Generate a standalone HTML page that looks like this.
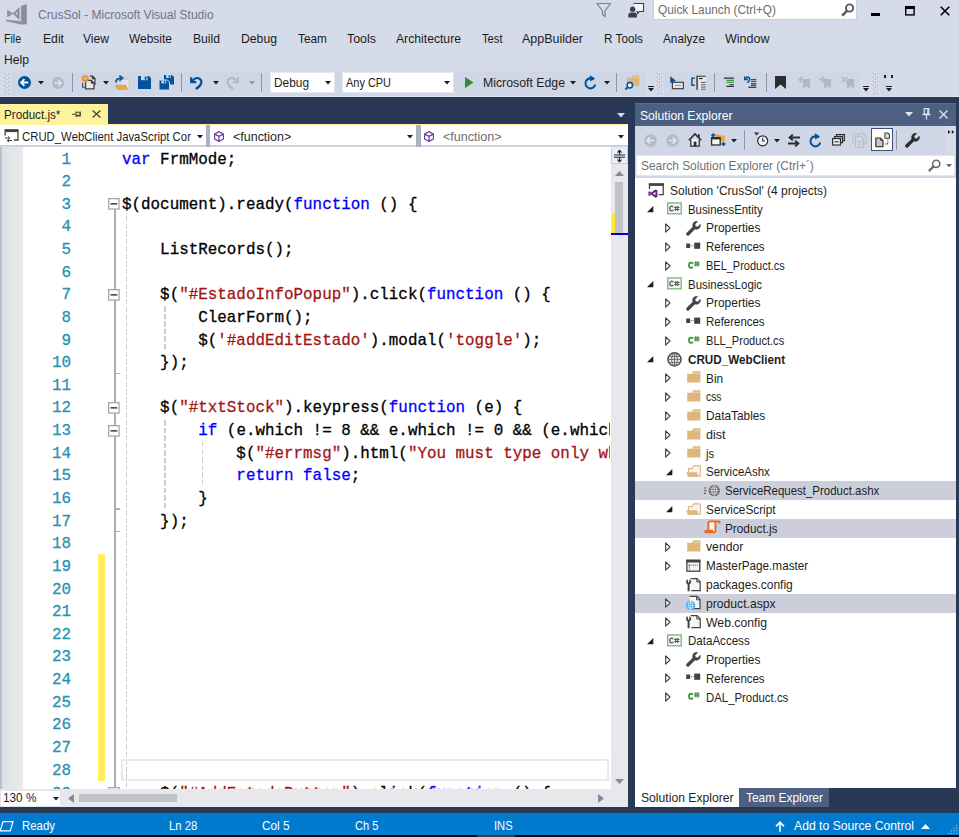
<!DOCTYPE html>
<html>
<head>
<meta charset="utf-8">
<title>CrusSol - Microsoft Visual Studio</title>
<style>
*{box-sizing:border-box;margin:0;padding:0}
html,body{width:959px;height:837px;overflow:hidden;background:#293955;font-family:"Liberation Sans",sans-serif;font-size:12px;color:#1e1e1e}
.abs{position:absolute}
svg{display:block;overflow:visible}
#app{position:relative;width:959px;height:837px;overflow:hidden;background:#293955}
.t{position:absolute;white-space:nowrap;transform-origin:0 50%}
.mono{font-family:"Liberation Mono",monospace}
.ln{-webkit-text-stroke:0.3px;position:absolute;left:0;white-space:pre;font-family:"Liberation Mono",monospace;color:#000;transform-origin:0 50%}
.k{color:#0000ff}.s{color:#a31515}

</style>
</head>
<body>
<div id="app">
<div class="abs" style="left:0px;top:0px;width:959px;height:97px;background:#d6dbe9;"></div>
<div class="abs" style="left:0px;top:96px;width:959px;height:1px;background:#e1e5ef;"></div>
<svg class="abs" style="left:5.5px;top:3.5px" width="21" height="21" viewBox="0 0 21 21"><g fill="#898c9a" stroke="#898c9a" stroke-width=".5" stroke-linejoin="round"><path d="M15.2 2.1L20.5 0.4V20L15.2 17.2Z"/><path d="M0.2 15.9L15.2 17.4L20.5 20L15.2 20.3L0.2 16.8Z"/><path d="M1.5 6.3L7 9.6L13.2 3.6V15.4L7 9.6 1.5 12.9ZM3.1 8.6V10.6L4.9 9.6ZM11.7 7.3L9 9.6L11.7 11.9Z" fill-rule="evenodd"/></g></svg>
<div class="t" style="left:38.30px;top:8.00px;font-size:12.6px;line-height:15.12px;color:#717486;transform:scaleX(0.9553);">CrusSol - Microsoft Visual Studio</div>
<svg class="abs" style="left:596px;top:2px" width="16" height="16" viewBox="0 0 16 16"><path d="M1 1.5H14.5L9 9V14.5L6.5 12.5V9Z" fill="none" stroke="#7a7f8e" stroke-width="1.2" stroke-linejoin="round"/></svg>
<svg class="abs" style="left:628px;top:3px" width="16" height="15" viewBox="0 0 16 15"><path d="M5.5 0.5H15.5V8.5H11.5L9.5 10.5V8.5H8.5" fill="#f4f6fa" stroke="#3b3f4a" stroke-width="1.1"/><circle cx="4.6" cy="6.2" r="2.6" fill="#3b3f4a"/><path d="M0.3 14.5V12.2Q0.3 9.6 3 9.6H6.2Q8.9 9.6 8.9 12.2V14.5Z" fill="#3b3f4a"/></svg>
<div class="abs" style="left:653px;top:0px;width:204px;height:20.3px;background:#ffffff;border:1px solid #c9cedd;border-top:none"></div>
<div class="t" style="left:658.00px;top:3.00px;font-size:12.6px;line-height:15.12px;color:#6d6d6d;transform:scaleX(0.9388);">Quick Launch (Ctrl+Q)</div>
<svg class="abs" style="left:841px;top:3px" width="14" height="14" viewBox="0 0 14 14"><circle cx="8.6" cy="5" r="3.6" fill="none" stroke="#5a5a5e" stroke-width="1.9"/><path d="M6 7.8L1.2 12.6" stroke="#5a5a5e" stroke-width="2.6" stroke-linecap="butt"/></svg>
<div class="abs" style="left:870.5px;top:13px;width:9.5px;height:3px;background:#000;"></div>
<svg class="abs" style="left:905px;top:5.5px" width="10" height="10" viewBox="0 0 10 10"><rect x="0.7" y="0.7" width="8.4" height="8.2" fill="none" stroke="#000" stroke-width="1.4"/><rect x="0" y="0" width="9.8" height="3" fill="#000"/></svg>
<svg class="abs" style="left:939.5px;top:5.5px" width="10" height="10" viewBox="0 0 10 10"><path d="M0.7 0.7L9.3 9.3M9.3 0.7L0.7 9.3" stroke="#000" stroke-width="1.6"/></svg>
<div class="t" style="left:4.00px;top:32.00px;font-size:12.6px;line-height:15.12px;color:#1b1b1c;transform:scaleX(0.8374);">File</div>
<div class="t" style="left:42.50px;top:32.00px;font-size:12.6px;line-height:15.12px;color:#1b1b1c;transform:scaleX(0.9672);">Edit</div>
<div class="t" style="left:83.00px;top:32.00px;font-size:12.6px;line-height:15.12px;color:#1b1b1c;transform:scaleX(0.9600);">View</div>
<div class="t" style="left:128.50px;top:32.00px;font-size:12.6px;line-height:15.12px;color:#1b1b1c;transform:scaleX(0.9495);">Website</div>
<div class="t" style="left:192.50px;top:32.00px;font-size:12.6px;line-height:15.12px;color:#1b1b1c;transform:scaleX(0.9637);">Build</div>
<div class="t" style="left:240.50px;top:32.00px;font-size:12.6px;line-height:15.12px;color:#1b1b1c;transform:scaleX(0.9697);">Debug</div>
<div class="t" style="left:297.50px;top:32.00px;font-size:12.6px;line-height:15.12px;color:#1b1b1c;transform:scaleX(0.9413);">Team</div>
<div class="t" style="left:346.50px;top:32.00px;font-size:12.6px;line-height:15.12px;color:#1b1b1c;transform:scaleX(0.9860);">Tools</div>
<div class="t" style="left:395.50px;top:32.00px;font-size:12.6px;line-height:15.12px;color:#1b1b1c;transform:scaleX(0.9669);">Architecture</div>
<div class="t" style="left:481.50px;top:32.00px;font-size:12.6px;line-height:15.12px;color:#1b1b1c;transform:scaleX(0.8872);">Test</div>
<div class="t" style="left:522.00px;top:32.00px;font-size:12.6px;line-height:15.12px;color:#1b1b1c;transform:scaleX(0.9897);">AppBuilder</div>
<div class="t" style="left:603.50px;top:32.00px;font-size:12.6px;line-height:15.12px;color:#1b1b1c;transform:scaleX(0.9334);">R Tools</div>
<div class="t" style="left:662.50px;top:32.00px;font-size:12.6px;line-height:15.12px;color:#1b1b1c;transform:scaleX(0.9370);">Analyze</div>
<div class="t" style="left:724.50px;top:32.00px;font-size:12.6px;line-height:15.12px;color:#1b1b1c;transform:scaleX(0.9930);">Window</div>
<div class="t" style="left:4.00px;top:53.00px;font-size:12.6px;line-height:15.12px;color:#1b1b1c;transform:scaleX(0.9648);">Help</div>
<div class="abs" style="left:10px;top:70.5px;width:635px;height:25.5px;background:#cfd6e5;"></div>
<div class="abs" style="left:664px;top:70.5px;width:196px;height:25.5px;background:#cfd6e5;"></div>
<div class="abs" style="left:881px;top:70.5px;width:7px;height:25.5px;background:#cfd6e5;"></div>
<svg class="abs" style="left:4px;top:73px" width="5" height="21" viewBox="0 0 5 21"><g fill="#a0a8bd"><rect x="0" y="0" width="1" height="1"/><rect x="4" y="0" width="1" height="1"/><rect x="2" y="2" width="1" height="1"/><rect x="0" y="4" width="1" height="1"/><rect x="4" y="4" width="1" height="1"/><rect x="2" y="6" width="1" height="1"/><rect x="0" y="8" width="1" height="1"/><rect x="4" y="8" width="1" height="1"/><rect x="2" y="10" width="1" height="1"/><rect x="0" y="12" width="1" height="1"/><rect x="4" y="12" width="1" height="1"/><rect x="2" y="14" width="1" height="1"/><rect x="0" y="16" width="1" height="1"/><rect x="4" y="16" width="1" height="1"/><rect x="2" y="18" width="1" height="1"/><rect x="0" y="20" width="1" height="1"/><rect x="4" y="20" width="1" height="1"/></g></svg>
<svg class="abs" style="left:657px;top:73px" width="5" height="21" viewBox="0 0 5 21"><g fill="#a0a8bd"><rect x="0" y="0" width="1" height="1"/><rect x="4" y="0" width="1" height="1"/><rect x="2" y="2" width="1" height="1"/><rect x="0" y="4" width="1" height="1"/><rect x="4" y="4" width="1" height="1"/><rect x="2" y="6" width="1" height="1"/><rect x="0" y="8" width="1" height="1"/><rect x="4" y="8" width="1" height="1"/><rect x="2" y="10" width="1" height="1"/><rect x="0" y="12" width="1" height="1"/><rect x="4" y="12" width="1" height="1"/><rect x="2" y="14" width="1" height="1"/><rect x="0" y="16" width="1" height="1"/><rect x="4" y="16" width="1" height="1"/><rect x="2" y="18" width="1" height="1"/><rect x="0" y="20" width="1" height="1"/><rect x="4" y="20" width="1" height="1"/></g></svg>
<svg class="abs" style="left:873px;top:73px" width="5" height="21" viewBox="0 0 5 21"><g fill="#a0a8bd"><rect x="0" y="0" width="1" height="1"/><rect x="4" y="0" width="1" height="1"/><rect x="2" y="2" width="1" height="1"/><rect x="0" y="4" width="1" height="1"/><rect x="4" y="4" width="1" height="1"/><rect x="2" y="6" width="1" height="1"/><rect x="0" y="8" width="1" height="1"/><rect x="4" y="8" width="1" height="1"/><rect x="2" y="10" width="1" height="1"/><rect x="0" y="12" width="1" height="1"/><rect x="4" y="12" width="1" height="1"/><rect x="2" y="14" width="1" height="1"/><rect x="0" y="16" width="1" height="1"/><rect x="4" y="16" width="1" height="1"/><rect x="2" y="18" width="1" height="1"/><rect x="0" y="20" width="1" height="1"/><rect x="4" y="20" width="1" height="1"/></g></svg>
<svg class="abs" style="left:17.5px;top:75.5px" width="13" height="13" viewBox="0 0 13 13"><circle cx="6.5" cy="6.5" r="6.5" fill="#00539c"/><path d="M10.3 6.5H3.4M6.4 3.2L3.1 6.5L6.4 9.8" fill="none" stroke="#fff" stroke-width="1.8"/></svg>
<svg class="abs" style="left:38.0px;top:80.75px" width="6" height="3.5" viewBox="0 0 6 3.5"><path d="M0 0H6L3.0 3.5Z" fill="#1e1e1e"/></svg>
<svg class="abs" style="left:51.5px;top:76.5px" width="12" height="12" viewBox="0 0 12 12"><circle cx="6" cy="6" r="6" fill="#b5b9c6"/><path d="M2.6 6H9M6.2 3L9.2 6L6.2 9" fill="none" stroke="#e3e6ef" stroke-width="1.6"/></svg>
<div class="abs" style="left:72px;top:72.5px;width:1px;height:19.5px;background:#8f95a8;"></div>
<svg class="abs" style="left:81px;top:75px" width="15" height="15" viewBox="0 0 15 15"><path d="M8.6 1.2H11.6L14 3.6V9.4H12" fill="#e6e8f0" stroke="#424242" stroke-width="1.2"/><path d="M11.2 1.2V4H14" fill="#2d2d30" stroke="#2d2d30" stroke-width=".6"/><path d="M4.6 8V12.2H1.6V7.8" fill="none" stroke="#4a4a4a" stroke-width="1.1"/><path d="M4.6 5.4H10.4L13 8V13.9H4.6Z" fill="#e6e8f0" stroke="#424242" stroke-width="1.3" stroke-linejoin="round"/><path d="M10.2 5.4V8.2H13" fill="#2d2d30" stroke="#2d2d30" stroke-width=".5"/><g stroke="#e8912d" stroke-width="1.5"><path d="M4.1 -.2V7.2M.4 3.5H7.8M1.5 .9L6.7 6.1M6.7 .9L1.5 6.1"/></g><circle cx="4.1" cy="3.5" r=".9" fill="#fbe9cf"/></svg>
<svg class="abs" style="left:103.0px;top:80.75px" width="6" height="3.5" viewBox="0 0 6 3.5"><path d="M0 0H6L3.0 3.5Z" fill="#1e1e1e"/></svg>
<svg class="abs" style="left:115px;top:75px" width="16" height="15" viewBox="0 0 16 15"><path d="M8 4.2H14.2V14.4H4" fill="#e3e5ef" stroke="#e6c088" stroke-width="1"/><path d="M0 9.7H11L12.9 14.7H2Z" fill="#e0a94f"/><path d="M1 7.4Q.6 3.4 6.4 3.1" fill="none" stroke="#00539c" stroke-width="1.8"/><path d="M4.4 .6L7.6 3.1L4.4 5.6" fill="none" stroke="#00539c" stroke-width="1.7"/></svg>
<svg class="abs" style="left:138px;top:76px" width="13" height="13" viewBox="0 0 13 13"><path d="M0 0H11L13 2V13H0Z" fill="#00539c"/><rect x="3" y="0" width="6.5" height="4.2" fill="#cfd6e5"/><rect x="6.7" y="0.6" width="1.8" height="3" fill="#00539c"/><rect x="2.5" y="7.5" width="8" height="5.5" fill="#00539c"/></svg>
<svg class="abs" style="left:159px;top:75px" width="15" height="15" viewBox="0 0 15 15"><path d="M5 0H13L15 2V9.5H5Z" fill="#00539c"/><rect x="7.2" y="0" width="4.6" height="3" fill="#cfd6e5"/><rect x="9.6" y=".4" width="1.4" height="2.2" fill="#00539c"/><path d="M0 5H8.5L10.5 7V15H0Z" fill="#00539c" stroke="#cfd6e5" stroke-width="1"/><rect x="2.4" y="5.4" width="4.8" height="3" fill="#cfd6e5"/><rect x="4.9" y="5.8" width="1.4" height="2.2" fill="#00539c"/></svg>
<div class="abs" style="left:181px;top:72.5px;width:1px;height:19.5px;background:#8f95a8;"></div>
<svg class="abs" style="left:190px;top:75.5px" width="13" height="14" viewBox="0 0 13 14"><path d="M1.2 1.2V6.2H6.2" fill="none" stroke="#00539c" stroke-width="2.2"/><path d="M2 5.5Q5 1.2 8.6 2.2Q12 3.6 11.2 7.4Q10.4 10.2 5.8 13" fill="none" stroke="#00539c" stroke-width="2.2"/></svg>
<svg class="abs" style="left:212.5px;top:80.75px" width="6" height="3.5" viewBox="0 0 6 3.5"><path d="M0 0H6L3.0 3.5Z" fill="#1e1e1e"/></svg>
<svg class="abs" style="left:226px;top:75.5px" width="13" height="14" viewBox="0 0 13 14"><path d="M11.8 1.2V6.2H6.8" fill="none" stroke="#b5b9c6" stroke-width="2.2"/><path d="M11 5.5Q8 1.2 4.4 2.2Q1 3.6 1.8 7.4Q2.6 10.2 7.2 13" fill="none" stroke="#b5b9c6" stroke-width="2.2"/></svg>
<svg class="abs" style="left:248.5px;top:80.75px" width="6" height="3.5" viewBox="0 0 6 3.5"><path d="M0 0H6L3.0 3.5Z" fill="#8f94a3"/></svg>
<div class="abs" style="left:261px;top:72.5px;width:1px;height:19.5px;background:#8f95a8;"></div>
<div class="abs" style="left:269.5px;top:72px;width:65.5px;height:21px;background:#ffffff;border:1px solid #e3e7f0"></div>
<div class="t" style="left:274.00px;top:76.00px;font-size:12.6px;line-height:15.12px;color:#1e1e1e;transform:scaleX(0.9427);">Debug</div>
<svg class="abs" style="left:324.5px;top:81.25px" width="6" height="3.5" viewBox="0 0 6 3.5"><path d="M0 0H6L3.0 3.5Z" fill="#1e1e1e"/></svg>
<div class="abs" style="left:342px;top:72px;width:112px;height:21px;background:#ffffff;border:1px solid #e3e7f0"></div>
<div class="t" style="left:346.00px;top:76.00px;font-size:12.6px;line-height:15.12px;color:#1e1e1e;transform:scaleX(0.8685);">Any CPU</div>
<svg class="abs" style="left:443.5px;top:81.25px" width="6" height="3.5" viewBox="0 0 6 3.5"><path d="M0 0H6L3.0 3.5Z" fill="#1e1e1e"/></svg>
<svg class="abs" style="left:465px;top:77px" width="9" height="11" viewBox="0 0 9 11"><path d="M0 0L8.5 5.5L0 11Z" fill="#388a34"/></svg>
<div class="t" style="left:482.50px;top:76.00px;font-size:12.6px;line-height:15.12px;color:#1e1e1e;transform:scaleX(0.9758);">Microsoft Edge</div>
<svg class="abs" style="left:569.5px;top:81.25px" width="6" height="3.5" viewBox="0 0 6 3.5"><path d="M0 0H6L3.0 3.5Z" fill="#1e1e1e"/></svg>
<svg class="abs" style="left:584px;top:75px" width="13" height="15" viewBox="0 0 13 15"><path d="M9.8 4.6A5 5 0 1 0 11.3 9.6" fill="none" stroke="#00539c" stroke-width="2.1"/><path d="M5.8 0.2L11 3.2L6.2 6.6Z" fill="#00539c"/></svg>
<svg class="abs" style="left:603.5px;top:81.25px" width="6" height="3.5" viewBox="0 0 6 3.5"><path d="M0 0H6L3.0 3.5Z" fill="#1e1e1e"/></svg>
<div class="abs" style="left:616px;top:72.5px;width:1px;height:19.5px;background:#8f95a8;"></div>
<svg class="abs" style="left:625px;top:75px" width="15" height="15" viewBox="0 0 15 15"><path d="M2 2.4H6.4L7.8 .6H14.2V11H2Z" fill="#dcb67a"/><path d="M8.4 2H13.4" stroke="#ecd3a6" stroke-width=".9"/><circle cx="4.8" cy="10.2" r="2.7" fill="#eef1f7" stroke="#00539c" stroke-width="1.5"/><path d="M2.9 12.1L.5 14.5" stroke="#00539c" stroke-width="1.9"/></svg>
<div class="abs" style="left:647.5px;top:85.5px;width:6px;height:1.3px;background:#1e1e1e;"></div>
<svg class="abs" style="left:647.5px;top:88.25px" width="6" height="3.5" viewBox="0 0 6 3.5"><path d="M0 0H6L3.0 3.5Z" fill="#1e1e1e"/></svg>
<svg class="abs" style="left:670px;top:75px" width="15" height="15" viewBox="0 0 15 15"><path d="M.3 1.2V8.6L2.2 6.9L3.5 9.4L4.9 8.7L3.7 6.3L6.2 6.1Z" fill="#00539c"/><rect x="2.4" y="7.3" width="11" height="6.4" fill="#e4e7f0" stroke="#424242" stroke-width="1.2"/><path d="M5 10.5H11" stroke="#9a9ca6" stroke-width="1.1"/></svg>
<svg class="abs" style="left:691px;top:75px" width="15" height="15" viewBox="0 0 15 15"><path d="M3.8 3.2H.9V10.2H3.8" fill="none" stroke="#00539c" stroke-width="1.4"/><path d="M6.2 .7V14.8" stroke="#5a5a5a" stroke-width="2"/><path d="M6.2 1.3H14.6" stroke="#5a5a5a" stroke-width="1.3"/><rect x="7.2" y="2" width="7.4" height="12.8" fill="#e4e7f0"/><path d="M8 3.5H11.6" stroke="#2d2d30" stroke-width="1.2"/><path d="M10 7.4H14.6M10 9.8H14.6M10 12.1H14.6M10 14.2H14.6" stroke="#5a5a5a" stroke-width="1"/></svg>
<div class="abs" style="left:713.5px;top:72.5px;width:1px;height:19.5px;background:#8f95a8;"></div>
<svg class="abs" style="left:724px;top:76px" width="11" height="12" viewBox="0 0 11 12"><path d="M0 2.1H10M2.3 10.4H10" stroke="#2d2d30" stroke-width="1.2"/><path d="M5.2 8.6H10" stroke="#5a5a5a" stroke-width="1.2"/><path d="M2.6 4.4H10M2.6 6.3H10" stroke="#3c9a3c" stroke-width="1.3"/></svg>
<svg class="abs" style="left:744px;top:75px" width="13" height="14" viewBox="0 0 13 14"><path d="M.7 1.4V4.6H3.9" fill="none" stroke="#00539c" stroke-width="1.4"/><path d="M1.2 4.2Q2.8 1.4 4.8 2.4Q6.6 3.8 4.8 6.2L3.4 7.8" fill="none" stroke="#00539c" stroke-width="1.5"/><path d="M7 4.6H12.3M7 6.5H12.3M7 8.6H12.3M7 10.4H12.3" stroke="#4a4a4a" stroke-width="1.1"/><path d="M4.3 12.3H12.3" stroke="#2d2d30" stroke-width="1.2"/></svg>
<div class="abs" style="left:766px;top:72.5px;width:1px;height:19.5px;background:#8f95a8;"></div>
<svg class="abs" style="left:775px;top:76px" width="11" height="13" viewBox="0 0 11 13"><path d="M0 0H11V13L5.5 8.6L0 13Z" fill="#2d2d30"/></svg>
<svg class="abs" style="left:798px;top:76px" width="12" height="13" viewBox="0 0 12 13"><path d="M5 3H12V13L8.5 10L5 13Z" fill="#b3b7c4"/><path d="M7 3.6H1.2M3.8 .8L1 3.6L3.8 6.4" fill="none" stroke="#b3b7c4" stroke-width="1.5"/></svg>
<svg class="abs" style="left:819px;top:76px" width="12" height="13" viewBox="0 0 12 13"><path d="M5 3H12V13L8.5 10L5 13Z" fill="#b3b7c4"/><path d="M0 3.6H5.8M3.2 .8L6 3.6L3.2 6.4" fill="none" stroke="#b3b7c4" stroke-width="1.5"/></svg>
<svg class="abs" style="left:840.5px;top:76px" width="13" height="13" viewBox="0 0 13 13"><path d="M6 3H13V13L9.5 10L6 13Z" fill="#b3b7c4"/><path d="M.5 .8L6.5 6.8M6.5 .8L.5 6.8" fill="none" stroke="#b3b7c4" stroke-width="1.5"/></svg>
<div class="abs" style="left:863px;top:85.5px;width:6px;height:1.3px;background:#1e1e1e;"></div>
<svg class="abs" style="left:863.0px;top:88.25px" width="6" height="3.5" viewBox="0 0 6 3.5"><path d="M0 0H6L3.0 3.5Z" fill="#1e1e1e"/></svg>
<div class="abs" style="left:884px;top:75px;width:1.5px;height:3px;background:#1e1e1e;"></div>
<div class="abs" style="left:891px;top:75px;width:1.5px;height:3px;background:#1e1e1e;"></div>
<div class="abs" style="left:886px;top:85.5px;width:6px;height:1.3px;background:#1e1e1e;"></div>
<svg class="abs" style="left:886.0px;top:88.25px" width="6" height="3.5" viewBox="0 0 6 3.5"><path d="M0 0H6L3.0 3.5Z" fill="#1e1e1e"/></svg>
<div class="abs" style="left:0px;top:103.5px;width:107.5px;height:21px;background:#fff29d;"></div>
<div class="t" style="left:4.20px;top:108.00px;font-size:12.6px;line-height:15.12px;color:#1e1e1e;transform:scaleX(0.9257);">Product.js*</div>
<svg class="abs" style="left:72px;top:110.5px" width="10" height="7" viewBox="0 0 10 7"><path d="M0 3.2H4M4 .4V6M4.4 1.2H8.2V4.2H4.4M4.4 5H8.2" fill="none" stroke="#4b4a3b" stroke-width="1.1"/><path d="M8.2 .8V5.6" stroke="#4b4a3b" stroke-width="1.2"/></svg>
<svg class="abs" style="left:91.7px;top:110.3px" width="9" height="8" viewBox="0 0 9 8"><path d="M.6 .4L8.4 7.6M8.4 .4L.6 7.6" stroke="#4b4a3b" stroke-width="1.4"/></svg>
<div class="abs" style="left:0px;top:123.6px;width:628px;height:2px;background:#fff29d;"></div>
<svg class="abs" style="left:616.7px;top:112.75px" width="8" height="4.5" viewBox="0 0 8 4.5"><path d="M0 0H8L4.0 4.5Z" fill="#d6dbe9"/></svg>
<div class="abs" style="left:0px;top:125.3px;width:628px;height:21.7px;background:#cfd6e5;"></div>
<div class="abs" style="left:0px;top:125.3px;width:205.5px;height:20.7px;background:#ffffff;border-bottom:1px solid #c5cbdb"></div>
<div class="abs" style="left:205.5px;top:125.3px;width:4px;height:21.7px;background:#aab2c6;"></div>
<div class="abs" style="left:209.5px;top:125.3px;width:206.5px;height:20.7px;background:#ffffff;border-bottom:1px solid #c5cbdb"></div>
<div class="abs" style="left:416px;top:125.3px;width:4.5px;height:21.7px;background:#aab2c6;"></div>
<div class="abs" style="left:420.5px;top:125.3px;width:207.5px;height:20.7px;background:#ffffff;border-bottom:1px solid #c5cbdb"></div>
<svg class="abs" style="left:4.4px;top:129px" width="15" height="13" viewBox="0 0 15 13"><path d="M1.2 6.6V1H14V11H10" fill="none" stroke="#424242" stroke-width="1.3"/><path d="M1.2 1.8H14" stroke="#424242" stroke-width="2.6"/><path d="M1 9H5.5M4 7.4L5.8 9L4 10.6M8 11.5H3.5M5 9.9L3.2 11.5L5 13.1" fill="none" stroke="#424242" stroke-width="1"/></svg>
<div class="t" style="left:22.00px;top:130.00px;font-size:12.6px;line-height:15.12px;color:#1e1e1e;transform:scaleX(0.9017);">CRUD_WebClient JavaScript Cor</div>
<svg class="abs" style="left:197.0px;top:135.25px" width="6" height="3.5" viewBox="0 0 6 3.5"><path d="M0 0H6L3.0 3.5Z" fill="#1e1e1e"/></svg>
<svg class="abs" style="left:214px;top:130.5px" width="10" height="11" viewBox="0 0 10 11"><path d="M5 .6L9.4 3V8L5 10.4L.6 8V3Z M.8 3.1L5 5.4L9.2 3.1M5 5.4V10.2" fill="none" stroke="#6b3fa0" stroke-width="1.2" stroke-linejoin="round"/></svg>
<div class="t" style="left:232.70px;top:130.00px;font-size:12.6px;line-height:15.12px;color:#1e1e1e;transform:scaleX(0.9907);">&lt;function&gt;</div>
<svg class="abs" style="left:407.0px;top:135.25px" width="6" height="3.5" viewBox="0 0 6 3.5"><path d="M0 0H6L3.0 3.5Z" fill="#1e1e1e"/></svg>
<svg class="abs" style="left:424.3px;top:130.5px" width="10" height="11" viewBox="0 0 10 11"><path d="M5 .6L9.4 3V8L5 10.4L.6 8V3Z M.8 3.1L5 5.4L9.2 3.1M5 5.4V10.2" fill="none" stroke="#6b3fa0" stroke-width="1.2" stroke-linejoin="round"/></svg>
<div class="t" style="left:442.50px;top:130.00px;font-size:12.6px;line-height:15.12px;color:#6d6d6d;transform:scaleX(0.9941);">&lt;function&gt;</div>
<svg class="abs" style="left:618.0px;top:135.25px" width="6" height="3.5" viewBox="0 0 6 3.5"><path d="M0 0H6L3.0 3.5Z" fill="#1e1e1e"/></svg>
<div class="abs" style="left:0;top:147px;width:611px;height:642.7px;background:#fff;overflow:hidden">
<div class="abs" style="left:0;top:0;width:2.3px;height:643px;background:#b9bfce"></div>
<div class="abs" style="left:2.3px;top:0;width:20.7px;height:643px;background:linear-gradient(90deg,#dfe0e3,#e9eaec)"></div>
<div class="abs" style="left:98px;top:407.34px;width:7px;height:226.30px;background:#ffee62"></div>
<div class="abs" style="left:114.4px;top:62.26px;width:1.4px;height:600px;background:#adadad"></div>
<div class="abs" style="left:115px;top:225.70px;width:5px;height:1.3px;background:#adadad"></div>
<div class="abs" style="left:115px;top:361.48px;width:5px;height:1.3px;background:#adadad"></div>
<div class="abs" style="left:115px;top:384.11px;width:5px;height:1.3px;background:#adadad"></div>
<div class="abs" style="left:125.8px;top:67.89px;width:1.3px;height:611.01px;background:repeating-linear-gradient(180deg,transparent 0,transparent 1px,#cdcdcd 1px,#cdcdcd 6.5px,transparent 6.5px,transparent 7.543px)"></div>
<div class="abs" style="left:164.4px;top:158.41px;width:1.3px;height:45.26px;background:repeating-linear-gradient(180deg,transparent 0,transparent 1px,#cdcdcd 1px,#cdcdcd 6.5px,transparent 6.5px,transparent 7.543px)"></div>
<div class="abs" style="left:164.4px;top:271.56px;width:1.3px;height:90.52px;background:repeating-linear-gradient(180deg,transparent 0,transparent 1px,#cdcdcd 1px,#cdcdcd 6.5px,transparent 6.5px,transparent 7.543px)"></div>
<div class="abs" style="left:201.8px;top:294.19px;width:1.3px;height:45.26px;background:repeating-linear-gradient(180deg,transparent 0,transparent 1px,#cdcdcd 1px,#cdcdcd 6.5px,transparent 6.5px,transparent 7.543px)"></div>
<div class="abs" style="left:120.5px;top:612.21px;width:488px;height:21.63px;border:2px solid #e9e9f3"></div>
<svg class="abs" style="left:108.2px;top:51.47px" width="11.7" height="11.7"><rect x=".65" y=".65" width="10.4" height="10.4" fill="#fff" stroke="#a8a8a8" stroke-width="1.3"/><path d="M2.5 5.85H9.2" stroke="#3c3c3c" stroke-width="1.5"/></svg>
<svg class="abs" style="left:108.2px;top:142.00px" width="11.7" height="11.7"><rect x=".65" y=".65" width="10.4" height="10.4" fill="#fff" stroke="#a8a8a8" stroke-width="1.3"/><path d="M2.5 5.85H9.2" stroke="#3c3c3c" stroke-width="1.5"/></svg>
<svg class="abs" style="left:108.2px;top:255.15px" width="11.7" height="11.7"><rect x=".65" y=".65" width="10.4" height="10.4" fill="#fff" stroke="#a8a8a8" stroke-width="1.3"/><path d="M2.5 5.85H9.2" stroke="#3c3c3c" stroke-width="1.5"/></svg>
<svg class="abs" style="left:108.2px;top:277.77px" width="11.7" height="11.7"><rect x=".65" y=".65" width="10.4" height="10.4" fill="#fff" stroke="#a8a8a8" stroke-width="1.3"/><path d="M2.5 5.85H9.2" stroke="#3c3c3c" stroke-width="1.5"/></svg>
<svg class="abs" style="left:108.2px;top:640.46px" width="11.7" height="11.7"><rect x=".65" y=".65" width="10.4" height="10.4" fill="#fff" stroke="#a8a8a8" stroke-width="1.3"/><path d="M2.5 5.85H9.2" stroke="#3c3c3c" stroke-width="1.5"/></svg>
<div class="ln" style="left:0;top:3.55px;font-size:16.4px;line-height:18.58px;width:71px;text-align:right;color:#2b91af;transform-origin:100% 50%;transform:scaleX(0.9688)">1</div>
<div class="ln" style="left:121.8px;top:3.55px;font-size:16.4px;line-height:18.58px;transform:scaleX(0.9688)"><span class="k">var</span> FrmMode;</div>
<div class="ln" style="left:0;top:26.18px;font-size:16.4px;line-height:18.58px;width:71px;text-align:right;color:#2b91af;transform-origin:100% 50%;transform:scaleX(0.9688)">2</div>
<div class="ln" style="left:0;top:48.81px;font-size:16.4px;line-height:18.58px;width:71px;text-align:right;color:#2b91af;transform-origin:100% 50%;transform:scaleX(0.9688)">3</div>
<div class="ln" style="left:121.8px;top:48.81px;font-size:16.4px;line-height:18.58px;transform:scaleX(0.9688)">$(document).ready(<span class="k">function</span> () {</div>
<div class="ln" style="left:0;top:71.44px;font-size:16.4px;line-height:18.58px;width:71px;text-align:right;color:#2b91af;transform-origin:100% 50%;transform:scaleX(0.9688)">4</div>
<div class="ln" style="left:0;top:94.07px;font-size:16.4px;line-height:18.58px;width:71px;text-align:right;color:#2b91af;transform-origin:100% 50%;transform:scaleX(0.9688)">5</div>
<div class="ln" style="left:121.8px;top:94.07px;font-size:16.4px;line-height:18.58px;transform:scaleX(0.9688)">    ListRecords();</div>
<div class="ln" style="left:0;top:116.70px;font-size:16.4px;line-height:18.58px;width:71px;text-align:right;color:#2b91af;transform-origin:100% 50%;transform:scaleX(0.9688)">6</div>
<div class="ln" style="left:0;top:139.33px;font-size:16.4px;line-height:18.58px;width:71px;text-align:right;color:#2b91af;transform-origin:100% 50%;transform:scaleX(0.9688)">7</div>
<div class="ln" style="left:121.8px;top:139.33px;font-size:16.4px;line-height:18.58px;transform:scaleX(0.9688)">    $(<span class="s">"#EstadoInfoPopup"</span>).click(<span class="k">function</span> () {</div>
<div class="ln" style="left:0;top:161.96px;font-size:16.4px;line-height:18.58px;width:71px;text-align:right;color:#2b91af;transform-origin:100% 50%;transform:scaleX(0.9688)">8</div>
<div class="ln" style="left:121.8px;top:161.96px;font-size:16.4px;line-height:18.58px;transform:scaleX(0.9688)">        ClearForm();</div>
<div class="ln" style="left:0;top:184.59px;font-size:16.4px;line-height:18.58px;width:71px;text-align:right;color:#2b91af;transform-origin:100% 50%;transform:scaleX(0.9688)">9</div>
<div class="ln" style="left:121.8px;top:184.59px;font-size:16.4px;line-height:18.58px;transform:scaleX(0.9688)">        $(<span class="s">'#addEditEstado'</span>).modal(<span class="s">'toggle'</span>);</div>
<div class="ln" style="left:0;top:207.22px;font-size:16.4px;line-height:18.58px;width:71px;text-align:right;color:#2b91af;transform-origin:100% 50%;transform:scaleX(0.9688)">10</div>
<div class="ln" style="left:121.8px;top:207.22px;font-size:16.4px;line-height:18.58px;transform:scaleX(0.9688)">    });</div>
<div class="ln" style="left:0;top:229.85px;font-size:16.4px;line-height:18.58px;width:71px;text-align:right;color:#2b91af;transform-origin:100% 50%;transform:scaleX(0.9688)">11</div>
<div class="ln" style="left:0;top:252.48px;font-size:16.4px;line-height:18.58px;width:71px;text-align:right;color:#2b91af;transform-origin:100% 50%;transform:scaleX(0.9688)">12</div>
<div class="ln" style="left:121.8px;top:252.48px;font-size:16.4px;line-height:18.58px;transform:scaleX(0.9688)">    $(<span class="s">"#txtStock"</span>).keypress(<span class="k">function</span> (e) {</div>
<div class="ln" style="left:0;top:275.11px;font-size:16.4px;line-height:18.58px;width:71px;text-align:right;color:#2b91af;transform-origin:100% 50%;transform:scaleX(0.9688)">13</div>
<div class="ln" style="left:121.8px;top:275.11px;font-size:16.4px;line-height:18.58px;transform:scaleX(0.9688)">        <span class="k">if</span> (e.which != 8 &amp;&amp; e.which != 0 &amp;&amp; (e.which == 1</div>
<div class="ln" style="left:0;top:297.74px;font-size:16.4px;line-height:18.58px;width:71px;text-align:right;color:#2b91af;transform-origin:100% 50%;transform:scaleX(0.9688)">14</div>
<div class="ln" style="left:121.8px;top:297.74px;font-size:16.4px;line-height:18.58px;transform:scaleX(0.9688)">            $(<span class="s">"#errmsg"</span>).html(<span class="s">"You must type only whole"</span></div>
<div class="ln" style="left:0;top:320.37px;font-size:16.4px;line-height:18.58px;width:71px;text-align:right;color:#2b91af;transform-origin:100% 50%;transform:scaleX(0.9688)">15</div>
<div class="ln" style="left:121.8px;top:320.37px;font-size:16.4px;line-height:18.58px;transform:scaleX(0.9688)">            <span class="k">return</span> <span class="k">false</span>;</div>
<div class="ln" style="left:0;top:343.00px;font-size:16.4px;line-height:18.58px;width:71px;text-align:right;color:#2b91af;transform-origin:100% 50%;transform:scaleX(0.9688)">16</div>
<div class="ln" style="left:121.8px;top:343.00px;font-size:16.4px;line-height:18.58px;transform:scaleX(0.9688)">        }</div>
<div class="ln" style="left:0;top:365.63px;font-size:16.4px;line-height:18.58px;width:71px;text-align:right;color:#2b91af;transform-origin:100% 50%;transform:scaleX(0.9688)">17</div>
<div class="ln" style="left:121.8px;top:365.63px;font-size:16.4px;line-height:18.58px;transform:scaleX(0.9688)">    });</div>
<div class="ln" style="left:0;top:388.26px;font-size:16.4px;line-height:18.58px;width:71px;text-align:right;color:#2b91af;transform-origin:100% 50%;transform:scaleX(0.9688)">18</div>
<div class="ln" style="left:0;top:410.89px;font-size:16.4px;line-height:18.58px;width:71px;text-align:right;color:#2b91af;transform-origin:100% 50%;transform:scaleX(0.9688)">19</div>
<div class="ln" style="left:0;top:433.52px;font-size:16.4px;line-height:18.58px;width:71px;text-align:right;color:#2b91af;transform-origin:100% 50%;transform:scaleX(0.9688)">20</div>
<div class="ln" style="left:0;top:456.15px;font-size:16.4px;line-height:18.58px;width:71px;text-align:right;color:#2b91af;transform-origin:100% 50%;transform:scaleX(0.9688)">21</div>
<div class="ln" style="left:0;top:478.78px;font-size:16.4px;line-height:18.58px;width:71px;text-align:right;color:#2b91af;transform-origin:100% 50%;transform:scaleX(0.9688)">22</div>
<div class="ln" style="left:0;top:501.41px;font-size:16.4px;line-height:18.58px;width:71px;text-align:right;color:#2b91af;transform-origin:100% 50%;transform:scaleX(0.9688)">23</div>
<div class="ln" style="left:0;top:524.04px;font-size:16.4px;line-height:18.58px;width:71px;text-align:right;color:#2b91af;transform-origin:100% 50%;transform:scaleX(0.9688)">24</div>
<div class="ln" style="left:0;top:546.67px;font-size:16.4px;line-height:18.58px;width:71px;text-align:right;color:#2b91af;transform-origin:100% 50%;transform:scaleX(0.9688)">25</div>
<div class="ln" style="left:0;top:569.30px;font-size:16.4px;line-height:18.58px;width:71px;text-align:right;color:#2b91af;transform-origin:100% 50%;transform:scaleX(0.9688)">26</div>
<div class="ln" style="left:0;top:591.93px;font-size:16.4px;line-height:18.58px;width:71px;text-align:right;color:#2b91af;transform-origin:100% 50%;transform:scaleX(0.9688)">27</div>
<div class="ln" style="left:0;top:614.56px;font-size:16.4px;line-height:18.58px;width:71px;text-align:right;color:#2b91af;transform-origin:100% 50%;transform:scaleX(0.9688)">28</div>
<div class="ln" style="left:0;top:638.19px;font-size:16.4px;line-height:18.58px;width:71px;text-align:right;color:#2b91af;transform-origin:100% 50%;transform:scaleX(0.9688)">29</div>
<div class="ln" style="left:121.8px;top:638.19px;font-size:16.4px;line-height:18.58px;transform:scaleX(0.9688)">    $(<span class="s">"#AddEstadoButton"</span>).click(<span class="k">function</span> () {</div>
<div class="abs" style="left:609.6px;top:0;width:2px;height:643px;background:#fff"></div>
</div>
<div class="abs" style="left:611px;top:147px;width:17px;height:659.7px;background:#e8e8ec;"></div>
<div class="abs" style="left:610.6px;top:147.6px;width:17.4px;height:16.8px;background:#e9eefb;border:1px solid #c3cbde;border-top:none"></div>
<svg class="abs" style="left:613.8px;top:150.3px" width="11" height="12" viewBox="0 0 11 12"><path d="M0 5H11M0 7.2H11" stroke="#1e1e1e" stroke-width="1.1"/><path d="M5.5 0.4V4.4M5.5 7.8V11.8" stroke="#1e1e1e" stroke-width="1.2"/><path d="M3.4 2.6L5.5 .4L7.6 2.6M3.4 9.6L5.5 11.8L7.6 9.6" fill="none" stroke="#1e1e1e" stroke-width="1.1"/></svg>
<svg class="abs" style="left:615px;top:171px" width="9" height="5" viewBox="0 0 9 5"><path d="M0 5L4.5 0L9 5Z" fill="#868999"/></svg>
<div class="abs" style="left:615.3px;top:181.7px;width:8px;height:52px;background:#c2c3c9;"></div>
<div class="abs" style="left:611.7px;top:214px;width:3.3px;height:20px;background:#f7e83a;"></div>
<div class="abs" style="left:611px;top:233.2px;width:17px;height:2px;background:#0000cd;"></div>
<svg class="abs" style="left:615px;top:778.5px" width="9" height="5" viewBox="0 0 9 5"><path d="M0 0L4.5 5L9 0Z" fill="#868999"/></svg>
<div class="abs" style="left:0px;top:789.3px;width:611px;height:17.4px;background:#e8e8ec;"></div>
<div class="abs" style="left:0px;top:789.7px;width:61px;height:17px;background:#ffffff;border:1px solid #e0e3ea"></div>
<div class="t" style="left:3.30px;top:791.00px;font-size:12.6px;line-height:15.12px;color:#1e1e1e;transform:scaleX(0.9349);">130 %</div>
<svg class="abs" style="left:52.7px;top:796.75px" width="6" height="3.5" viewBox="0 0 6 3.5"><path d="M0 0H6L3.0 3.5Z" fill="#1e1e1e"/></svg>
<svg class="abs" style="left:67.5px;top:793.5px" width="6" height="9" viewBox="0 0 6 9"><path d="M6 0L0 4.5L6 9Z" fill="#868999"/></svg>
<div class="abs" style="left:78.8px;top:793.7px;width:98px;height:8.3px;background:#c2c3c9;"></div>
<svg class="abs" style="left:598px;top:793.5px" width="6" height="9" viewBox="0 0 6 9"><path d="M0 0L6 4.5L0 9Z" fill="#868999"/></svg>
<div class="abs" style="left:635.2px;top:104px;width:320.8px;height:683.5px;background:#cfd6e5;"></div>
<div class="abs" style="left:635.2px;top:103.2px;width:320.8px;height:22.5px;background:#4d6082;border-top:1px solid #5b6d8f"></div>
<div class="t" style="left:639.60px;top:109.00px;font-size:12.6px;line-height:15.12px;color:#ffffff;transform:scaleX(0.9651);">Solution Explorer</div>
<svg class="abs" style="left:905.3px;top:112.25px" width="8" height="4.5" viewBox="0 0 8 4.5"><path d="M0 0H8L4.0 4.5Z" fill="#dfe3ee"/></svg>
<svg class="abs" style="left:921.5px;top:108px" width="9" height="12" viewBox="0 0 9 12"><path d="M2.2 .6H6.8V6.2H2.2ZM.4 6.6H8.6M4.5 6.6V11.6" fill="none" stroke="#dfe3ee" stroke-width="1.2"/><path d="M6 .6V6.2" stroke="#dfe3ee" stroke-width="1.6"/></svg>
<svg class="abs" style="left:939.3px;top:110px" width="9" height="9" viewBox="0 0 9 9"><path d="M.5 .5L8.5 8.5M8.5 .5L.5 8.5" stroke="#dfe3ee" stroke-width="1.4"/></svg>
<div class="abs" style="left:635.2px;top:125.7px;width:320.8px;height:28.8px;background:#cfd6e5;"></div>
<div class="abs" style="left:946px;top:125.7px;width:10px;height:28.8px;background:#d6dbe9;"></div>
<svg class="abs" style="left:948px;top:130.3px" width="7" height="4" viewBox="0 0 7 4"><path d="M0 0L2.4 2L0 4ZM3.8 0L6.2 2L3.8 4Z" fill="#1e1e1e"/></svg>
<svg class="abs" style="left:644.2px;top:134px" width="13" height="13" viewBox="0 0 13 13"><circle cx="6.5" cy="6.5" r="6.3" fill="#b5b9c6"/><path d="M10 6.5H3.4M6.2 3.4L3.1 6.5L6.2 9.6" fill="none" stroke="#e3e6ef" stroke-width="1.6"/></svg>
<svg class="abs" style="left:665.8px;top:134px" width="13" height="13" viewBox="0 0 13 13"><circle cx="6.5" cy="6.5" r="6.3" fill="#b5b9c6"/><path d="M3 6.5H9.6M6.8 3.4L9.9 6.5L6.8 9.6" fill="none" stroke="#e3e6ef" stroke-width="1.6"/></svg>
<svg class="abs" style="left:687.5px;top:133px" width="14" height="14" viewBox="0 0 14 14"><path d="M.8 7.2L7 1L13.2 7.2" fill="none" stroke="#2d2d30" stroke-width="1.6"/><path d="M2.8 6.5V13.2H11.2V6.5" fill="#f3f4f8" stroke="#2d2d30" stroke-width="1.3"/><rect x="5.7" y="8.6" width="2.8" height="4.6" fill="#2d2d30"/><rect x="10" y="1.2" width="1.6" height="3.5" fill="#2d2d30"/></svg>
<svg class="abs" style="left:710px;top:132px" width="16" height="15" viewBox="0 0 16 15"><path d="M6 2.5H9.5L10.5 3.6H15V9.5H6Z" fill="#e3ab4a"/><rect x="1.6" y="5.6" width="8.6" height="7.4" fill="#f3f4f8" stroke="#2d2d30" stroke-width="1.3"/><path d="M1.6 6.4H10.2" stroke="#2d2d30" stroke-width="2"/><path d="M2 3.2H5.5M4 1.4L1.8 3.2L4 5M14.8 12H11.4M12.8 10.2L15 12L12.8 13.8" fill="none" stroke="#00539c" stroke-width="1.3"/></svg>
<svg class="abs" style="left:731.0px;top:138.75px" width="6" height="3.5" viewBox="0 0 6 3.5"><path d="M0 0H6L3.0 3.5Z" fill="#1e1e1e"/></svg>
<div class="abs" style="left:744px;top:130px;width:1px;height:20px;background:#8f95a8;"></div>
<svg class="abs" style="left:754px;top:132px" width="15" height="15" viewBox="0 0 15 15"><circle cx="8.7" cy="8.8" r="5" fill="#f3f4f8" stroke="#2d2d30" stroke-width="1.2"/><path d="M8.7 5.8V9H11" fill="none" stroke="#2d2d30" stroke-width="1.1"/><path d="M0 .6H5.2L2.6 3.6Z" fill="#2d2d30"/></svg>
<svg class="abs" style="left:774.0px;top:138.75px" width="6" height="3.5" viewBox="0 0 6 3.5"><path d="M0 0H6L3.0 3.5Z" fill="#1e1e1e"/></svg>
<svg class="abs" style="left:787.5px;top:134px" width="12" height="13" viewBox="0 0 12 13"><path d="M12 3.5H1.6M4.8 .6L1.6 3.5L4.8 6.4M0 9.5H10.4M7.2 6.6L10.4 9.5L7.2 12.4" fill="none" stroke="#2d2d30" stroke-width="1.9"/></svg>
<svg class="abs" style="left:809px;top:132.5px" width="13" height="15" viewBox="0 0 13 15"><path d="M9.8 4.6A5 5 0 1 0 11.3 9.6" fill="none" stroke="#00539c" stroke-width="2.1"/><path d="M5.8 0.2L11 3.2L6.2 6.6Z" fill="#00539c"/></svg>
<svg class="abs" style="left:832px;top:134px" width="13" height="12" viewBox="0 0 13 12"><path d="M4.5 2.5V.6H12.4V6.6H10.6" fill="none" stroke="#2d2d30" stroke-width="1.2"/><path d="M2.5 4.5V2.6H10.4V8.6H8.6" fill="none" stroke="#2d2d30" stroke-width="1.2"/><rect x=".6" y="4.6" width="7.8" height="6.4" fill="#f3f4f8" stroke="#2d2d30" stroke-width="1.2"/><path d="M2.5 7.8H6.5" stroke="#00539c" stroke-width="1.3"/></svg>
<svg class="abs" style="left:852px;top:133px" width="15" height="15" viewBox="0 0 15 15"><path d="M1 9.6V1.2H5.6L7.6 3.2" fill="none" stroke="#b9bdc9" stroke-width="1.1"/><path d="M7 3V.8H11.6L14 3.2V10.6H11.6" fill="none" stroke="#b9bdc9" stroke-width="1.1"/><path d="M3.6 3.8H8.8L11.4 6.4V14.2H3.6Z" fill="#d9dde8" stroke="#b3b7c4" stroke-width="1.1"/><path d="M5.2 8H9.6M5.2 10H9.6M5.2 12H9.6" stroke="#b3b7c4"/></svg>
<div class="abs" style="left:871.2px;top:128.1px;width:21.8px;height:23.4px;background:#fffcf4;border:1px solid #3d5277"></div>
<svg class="abs" style="left:874.5px;top:131.5px" width="15" height="16" viewBox="0 0 15 16"><path d="M.8 6.2H5.6L8 8.6V14.6H.8Z" fill="#c6c8d4" stroke="#424242" stroke-width="1.3" stroke-linejoin="round"/><path d="M5.4 6.2L8 8.8H5.4Z" fill="#2d2d30"/><path d="M10 1H12.8L14.4 2.6V6.2H10Z" fill="#e1e3ea" stroke="#424242" stroke-width="1.1"/><path d="M12.8 7.6V12" stroke="#424242" stroke-width="1" stroke-dasharray="1 1"/><path d="M10.4 11.8H13" stroke="#424242" stroke-width="1.2" stroke-dasharray="1 .7"/></svg>
<div class="abs" style="left:896px;top:130px;width:1px;height:20px;background:#8f95a8;"></div>
<svg class="abs" style="left:904.5px;top:133px" width="15" height="15" viewBox="0 0 15 15"><g fill="#2d2d30" stroke="#2d2d30" stroke-width=".6"><path d="M14.3 3.2L11.6 5.9L9.5 5.4L9 3.3L11.7 .6Q9.5 -.2 7.6 1.6Q6 3.4 6.8 5.9L.7 12Q-.1 13 .8 14Q1.8 15 2.8 14.2L8.9 8.1Q11.4 8.9 13.3 7.2Q15 5.4 14.3 3.2Z"/></g></svg>
<div class="abs" style="left:635.2px;top:154.5px;width:320.8px;height:23.5px;background:#cfd6e5;"></div>
<div class="abs" style="left:636.0px;top:154.8px;width:319.2px;height:20.8px;background:#ffffff;border:1px solid #e3e7f0"></div>
<div class="t" style="left:641.30px;top:159.00px;font-size:12.6px;line-height:15.12px;color:#717171;transform:scaleX(0.9479);">Search Solution Explorer (Ctrl+´)</div>
<svg class="abs" style="left:928px;top:158.5px" width="13" height="13" viewBox="0 0 13 13"><circle cx="8.2" cy="4.8" r="3.6" fill="none" stroke="#6a6a6a" stroke-width="1.6"/><path d="M5.6 7.4L.9 12.1" stroke="#6a6a6a" stroke-width="2.2"/></svg>
<svg class="abs" style="left:946.0px;top:163.9px" width="6" height="3.2" viewBox="0 0 6 3.2"><path d="M0 0H6L3.0 3.2Z" fill="#6a6a6a"/></svg>
<div class="abs" style="left:635.2px;top:178px;width:320.8px;height:609.5px;background:#ffffff;"></div>
<svg class="abs" style="left:648.2px;top:182.68px" width="16" height="16" viewBox="0 0 16 16"><path d="M1.5 6V1.2H15.2V11.6H10.6" fill="none" stroke="#424242" stroke-width="1.3"/><path d="M.9 1.6H15.8" stroke="#424242" stroke-width="2.6"/><path d="M7.4 6.4L9.4 7.2V14L7.4 14.8L3.2 11.6L1.4 13L.4 12.4V8.8L1.4 8.2L3.2 9.6ZM7.4 8.9L5 10.6L7.4 12.3ZM1.5 9.7V11.5L2.5 10.6Z" fill="#68217a" fill-rule="evenodd"/></svg>
<div class="t" style="left:669.50px;top:184.00px;font-size:12.6px;line-height:15.12px;color:#1e1e1e;transform:scaleX(0.9511);">Solution &#x27;CrusSol&#x27; (4 projects)</div>
<svg class="abs" style="left:647.3px;top:206.14px" width="7" height="7" viewBox="0 0 7 7"><path d="M6.3 0V6.3H0Z" fill="#1e1e1e"/></svg>
<svg class="abs" style="left:666px;top:201.44px" width="16" height="16" viewBox="0 0 16 16"><rect x="1.7" y="1.9" width="13.5" height="10.9" fill="#f6f6f6" stroke="#7fbb7f" stroke-width="1.4"/><path d="M7.3 5.9Q6.5 5.1 5.5 5.1Q3.8 5.3 3.8 7.5Q3.8 9.7 5.5 9.9Q6.5 9.9 7.3 9.1" fill="none" stroke="#5b5b5b" stroke-width="1.4"/><path d="M9.7 5V10M11.7 5V10M8.2 6.5H13.4M8.2 8.5H13.4" stroke="#5b5b5b" stroke-width="1.1"/></svg>
<div class="t" style="left:688.30px;top:203.00px;font-size:12.6px;line-height:15.12px;color:#1e1e1e;transform:scaleX(0.9040);">BusinessEntity</div>
<svg class="abs" style="left:665.3px;top:223.20000000000002px" width="6" height="10" viewBox="0 0 6 10"><path d="M.7 .9L5 5L.7 9.1Z" fill="#fff" stroke="#3a3a3a" stroke-width="1.1" stroke-linejoin="round"/></svg>
<svg class="abs" style="left:685.9px;top:220.50000000000003px" width="15" height="15" viewBox="0 0 15 15"><g fill="#424242" stroke="#424242" stroke-width=".5"><path d="M14.3 3.2L11.6 5.9L9.5 5.4L9 3.3L11.7 .6Q9.5 -.2 7.6 1.6Q6 3.4 6.8 5.9L.7 12Q-.1 13 .8 14Q1.8 15 2.8 14.2L8.9 8.1Q11.4 8.9 13.3 7.2Q15 5.4 14.3 3.2Z"/></g></svg>
<div class="t" style="left:706.20px;top:221.00px;font-size:12.6px;line-height:15.12px;color:#1e1e1e;transform:scaleX(0.9491);">Properties</div>
<svg class="abs" style="left:665.3px;top:241.96px" width="6" height="10" viewBox="0 0 6 10"><path d="M.7 .9L5 5L.7 9.1Z" fill="#fff" stroke="#3a3a3a" stroke-width="1.1" stroke-linejoin="round"/></svg>
<svg class="abs" style="left:684.8px;top:238.96px" width="16" height="16" viewBox="0 0 16 16"><rect x="1.2" y="4.5" width="3.9" height="4.5" fill="#424242"/><rect x="9.2" y="3.6" width="6" height="6.2" fill="#424242"/><path d="M5.8 6.8H8.6" stroke="#6a6a6a" stroke-width="1.1" stroke-dasharray="1.1 .8"/></svg>
<div class="t" style="left:706.20px;top:240.00px;font-size:12.6px;line-height:15.12px;color:#1e1e1e;transform:scaleX(0.9095);">References</div>
<svg class="abs" style="left:665.3px;top:260.72px" width="6" height="10" viewBox="0 0 6 10"><path d="M.7 .9L5 5L.7 9.1Z" fill="#fff" stroke="#3a3a3a" stroke-width="1.1" stroke-linejoin="round"/></svg>
<svg class="abs" style="left:684.8px;top:257.72px" width="16" height="16" viewBox="0 0 16 16"><path d="M8 5.6Q7 4.7 5.9 4.7Q3.9 4.9 3.9 7.3Q3.9 9.7 5.9 9.9Q7 9.9 8 9" fill="none" stroke="#3c963c" stroke-width="1.7"/><path d="M10.8 3.3V8.4M12.9 3.3V8.4M9.2 4.9H14.5M9.2 6.9H14.5" stroke="#3c963c" stroke-width="1.2"/></svg>
<div class="t" style="left:706.20px;top:259.00px;font-size:12.6px;line-height:15.12px;color:#1e1e1e;transform:scaleX(0.8722);">BEL_Product.cs</div>
<svg class="abs" style="left:647.3px;top:281.18px" width="7" height="7" viewBox="0 0 7 7"><path d="M6.3 0V6.3H0Z" fill="#1e1e1e"/></svg>
<svg class="abs" style="left:666px;top:276.48px" width="16" height="16" viewBox="0 0 16 16"><rect x="1.7" y="1.9" width="13.5" height="10.9" fill="#f6f6f6" stroke="#7fbb7f" stroke-width="1.4"/><path d="M7.3 5.9Q6.5 5.1 5.5 5.1Q3.8 5.3 3.8 7.5Q3.8 9.7 5.5 9.9Q6.5 9.9 7.3 9.1" fill="none" stroke="#5b5b5b" stroke-width="1.4"/><path d="M9.7 5V10M11.7 5V10M8.2 6.5H13.4M8.2 8.5H13.4" stroke="#5b5b5b" stroke-width="1.1"/></svg>
<div class="t" style="left:688.30px;top:278.00px;font-size:12.6px;line-height:15.12px;color:#1e1e1e;transform:scaleX(0.9121);">BusinessLogic</div>
<svg class="abs" style="left:665.3px;top:298.24px" width="6" height="10" viewBox="0 0 6 10"><path d="M.7 .9L5 5L.7 9.1Z" fill="#fff" stroke="#3a3a3a" stroke-width="1.1" stroke-linejoin="round"/></svg>
<svg class="abs" style="left:685.9px;top:295.54px" width="15" height="15" viewBox="0 0 15 15"><g fill="#424242" stroke="#424242" stroke-width=".5"><path d="M14.3 3.2L11.6 5.9L9.5 5.4L9 3.3L11.7 .6Q9.5 -.2 7.6 1.6Q6 3.4 6.8 5.9L.7 12Q-.1 13 .8 14Q1.8 15 2.8 14.2L8.9 8.1Q11.4 8.9 13.3 7.2Q15 5.4 14.3 3.2Z"/></g></svg>
<div class="t" style="left:706.20px;top:296.00px;font-size:12.6px;line-height:15.12px;color:#1e1e1e;transform:scaleX(0.9491);">Properties</div>
<svg class="abs" style="left:665.3px;top:317.0px" width="6" height="10" viewBox="0 0 6 10"><path d="M.7 .9L5 5L.7 9.1Z" fill="#fff" stroke="#3a3a3a" stroke-width="1.1" stroke-linejoin="round"/></svg>
<svg class="abs" style="left:684.8px;top:314.0px" width="16" height="16" viewBox="0 0 16 16"><rect x="1.2" y="4.5" width="3.9" height="4.5" fill="#424242"/><rect x="9.2" y="3.6" width="6" height="6.2" fill="#424242"/><path d="M5.8 6.8H8.6" stroke="#6a6a6a" stroke-width="1.1" stroke-dasharray="1.1 .8"/></svg>
<div class="t" style="left:706.20px;top:315.00px;font-size:12.6px;line-height:15.12px;color:#1e1e1e;transform:scaleX(0.9095);">References</div>
<svg class="abs" style="left:665.3px;top:335.76px" width="6" height="10" viewBox="0 0 6 10"><path d="M.7 .9L5 5L.7 9.1Z" fill="#fff" stroke="#3a3a3a" stroke-width="1.1" stroke-linejoin="round"/></svg>
<svg class="abs" style="left:684.8px;top:332.76px" width="16" height="16" viewBox="0 0 16 16"><path d="M8 5.6Q7 4.7 5.9 4.7Q3.9 4.9 3.9 7.3Q3.9 9.7 5.9 9.9Q7 9.9 8 9" fill="none" stroke="#3c963c" stroke-width="1.7"/><path d="M10.8 3.3V8.4M12.9 3.3V8.4M9.2 4.9H14.5M9.2 6.9H14.5" stroke="#3c963c" stroke-width="1.2"/></svg>
<div class="t" style="left:706.20px;top:334.00px;font-size:12.6px;line-height:15.12px;color:#1e1e1e;transform:scaleX(0.8792);">BLL_Product.cs</div>
<svg class="abs" style="left:647.3px;top:356.21999999999997px" width="7" height="7" viewBox="0 0 7 7"><path d="M6.3 0V6.3H0Z" fill="#1e1e1e"/></svg>
<svg class="abs" style="left:666px;top:351.52px" width="16" height="16" viewBox="0 0 16 16"><circle cx="8.5" cy="7.4" r="6.5" fill="#ececec" stroke="#505050" stroke-width="1.6"/><ellipse cx="8.5" cy="7.4" rx="2.8" ry="6.2" fill="none" stroke="#6e6e6e" stroke-width="1"/><path d="M2.2 7.4H14.8M3 4.4H14M3 10.4H14M8.5 1V13.8" stroke="#6e6e6e" stroke-width="1"/></svg>
<div class="t" style="left:688.30px;top:353.00px;font-size:12.6px;line-height:15.12px;color:#1e1e1e;transform:scaleX(0.9268);font-weight:bold;">CRUD_WebClient</div>
<svg class="abs" style="left:665.3px;top:373.28000000000003px" width="6" height="10" viewBox="0 0 6 10"><path d="M.7 .9L5 5L.7 9.1Z" fill="#fff" stroke="#3a3a3a" stroke-width="1.1" stroke-linejoin="round"/></svg>
<svg class="abs" style="left:684.8px;top:370.28000000000003px" width="16" height="16" viewBox="0 0 16 16"><path d="M2.2 3.7H7.2L8.2 1.2H15.4V12.4H2.2Z" fill="#dcb67a"/><path d="M8.6 3.2H14.6" stroke="#f1e2c6" stroke-width=".9"/></svg>
<div class="t" style="left:706.20px;top:372.00px;font-size:12.6px;line-height:15.12px;color:#1e1e1e;transform:scaleX(0.9390);">Bin</div>
<svg class="abs" style="left:665.3px;top:392.04px" width="6" height="10" viewBox="0 0 6 10"><path d="M.7 .9L5 5L.7 9.1Z" fill="#fff" stroke="#3a3a3a" stroke-width="1.1" stroke-linejoin="round"/></svg>
<svg class="abs" style="left:684.8px;top:389.04px" width="16" height="16" viewBox="0 0 16 16"><path d="M2.2 3.7H7.2L8.2 1.2H15.4V12.4H2.2Z" fill="#dcb67a"/><path d="M8.6 3.2H14.6" stroke="#f1e2c6" stroke-width=".9"/></svg>
<div class="t" style="left:706.20px;top:390.00px;font-size:12.6px;line-height:15.12px;color:#1e1e1e;transform:scaleX(0.8148);">css</div>
<svg class="abs" style="left:665.3px;top:410.8px" width="6" height="10" viewBox="0 0 6 10"><path d="M.7 .9L5 5L.7 9.1Z" fill="#fff" stroke="#3a3a3a" stroke-width="1.1" stroke-linejoin="round"/></svg>
<svg class="abs" style="left:684.8px;top:407.8px" width="16" height="16" viewBox="0 0 16 16"><path d="M2.2 3.7H7.2L8.2 1.2H15.4V12.4H2.2Z" fill="#dcb67a"/><path d="M8.6 3.2H14.6" stroke="#f1e2c6" stroke-width=".9"/></svg>
<div class="t" style="left:706.20px;top:409.00px;font-size:12.6px;line-height:15.12px;color:#1e1e1e;transform:scaleX(0.9408);">DataTables</div>
<svg class="abs" style="left:665.3px;top:429.56000000000006px" width="6" height="10" viewBox="0 0 6 10"><path d="M.7 .9L5 5L.7 9.1Z" fill="#fff" stroke="#3a3a3a" stroke-width="1.1" stroke-linejoin="round"/></svg>
<svg class="abs" style="left:684.8px;top:426.56000000000006px" width="16" height="16" viewBox="0 0 16 16"><path d="M2.2 3.7H7.2L8.2 1.2H15.4V12.4H2.2Z" fill="#dcb67a"/><path d="M8.6 3.2H14.6" stroke="#f1e2c6" stroke-width=".9"/></svg>
<div class="t" style="left:706.20px;top:428.00px;font-size:12.6px;line-height:15.12px;color:#1e1e1e;transform:scaleX(0.9946);">dist</div>
<svg class="abs" style="left:665.3px;top:448.32000000000005px" width="6" height="10" viewBox="0 0 6 10"><path d="M.7 .9L5 5L.7 9.1Z" fill="#fff" stroke="#3a3a3a" stroke-width="1.1" stroke-linejoin="round"/></svg>
<svg class="abs" style="left:684.8px;top:445.32000000000005px" width="16" height="16" viewBox="0 0 16 16"><path d="M2.2 3.7H7.2L8.2 1.2H15.4V12.4H2.2Z" fill="#dcb67a"/><path d="M8.6 3.2H14.6" stroke="#f1e2c6" stroke-width=".9"/></svg>
<div class="t" style="left:706.20px;top:447.00px;font-size:12.6px;line-height:15.12px;color:#1e1e1e;transform:scaleX(0.9011);">js</div>
<svg class="abs" style="left:665.8px;top:468.78000000000003px" width="7" height="7" viewBox="0 0 7 7"><path d="M6.3 0V6.3H0Z" fill="#1e1e1e"/></svg>
<svg class="abs" style="left:684.8px;top:464.08000000000004px" width="16" height="16" viewBox="0 0 16 16"><path d="M3.4 4.6H7.4L8.4 1.9H15.3V12.3H3.4Z" fill="#f4f4f4" stroke="#dcb67a" stroke-width="1.1" stroke-linejoin="round"/><path d="M1.3 8.2H11.8L13.7 12.6H2.9Z" fill="#dcb67a"/></svg>
<div class="t" style="left:706.20px;top:465.00px;font-size:12.6px;line-height:15.12px;color:#1e1e1e;transform:scaleX(0.9111);">ServiceAshx</div>
<div class="abs" style="left:635.2px;top:481.46000000000004px;width:320.8px;height:18.76px;background:#ccceDB;"></div>
<svg class="abs" style="left:703.5px;top:482.84000000000003px" width="17" height="16" viewBox="0 0 17 16"><path d="M0 5H2M0 7.7H2.6M0 10.4H2" stroke="#5a5a5a" stroke-width="1.1"/><circle cx="10.2" cy="7.6" r="5.6" fill="#5c5c5c"/><ellipse cx="10.2" cy="7.6" rx="2.3" ry="4.6" fill="none" stroke="#dcdcdc" stroke-width=".9"/><path d="M5.4 7.6H15M6.2 5.2H14.2M6.2 10H14.2M10.2 3V12.2" stroke="#dcdcdc" stroke-width=".9"/></svg>
<div class="t" style="left:725.00px;top:484.00px;font-size:12.6px;line-height:15.12px;color:#1e1e1e;transform:scaleX(0.9110);">ServiceRequest_Product.ashx</div>
<svg class="abs" style="left:665.8px;top:506.3px" width="7" height="7" viewBox="0 0 7 7"><path d="M6.3 0V6.3H0Z" fill="#1e1e1e"/></svg>
<svg class="abs" style="left:684.8px;top:501.6px" width="16" height="16" viewBox="0 0 16 16"><path d="M3.4 4.6H7.4L8.4 1.9H15.3V12.3H3.4Z" fill="#f4f4f4" stroke="#dcb67a" stroke-width="1.1" stroke-linejoin="round"/><path d="M1.3 8.2H11.8L13.7 12.6H2.9Z" fill="#dcb67a"/></svg>
<div class="t" style="left:706.20px;top:503.00px;font-size:12.6px;line-height:15.12px;color:#1e1e1e;transform:scaleX(0.9378);">ServiceScript</div>
<div class="abs" style="left:635.2px;top:518.98px;width:320.8px;height:18.76px;background:#ccceDB;"></div>
<svg class="abs" style="left:703.5px;top:520.36px" width="16" height="16" viewBox="0 0 16 16"><path d="M4.6 3V11.4Q4.6 12.4 3.6 12.4H10Q11.2 12.4 11.2 11.2V1.5H4.6Z" fill="#f4f4f4"/><path d="M4.4 11V2.8Q4.4 1.4 5.8 1.4H15.4V3.6M11.4 1.6V11Q11.4 12.4 10 12.4H1.2Q1 11 2.4 10.8H9" fill="none" stroke="#f16522" stroke-width="1.9" stroke-linejoin="round"/></svg>
<div class="t" style="left:725.00px;top:522.00px;font-size:12.6px;line-height:15.12px;color:#1e1e1e;transform:scaleX(0.9372);">Product.js</div>
<svg class="abs" style="left:665.3px;top:542.12px" width="6" height="10" viewBox="0 0 6 10"><path d="M.7 .9L5 5L.7 9.1Z" fill="#fff" stroke="#3a3a3a" stroke-width="1.1" stroke-linejoin="round"/></svg>
<svg class="abs" style="left:684.8px;top:539.12px" width="16" height="16" viewBox="0 0 16 16"><path d="M2.2 3.7H7.2L8.2 1.2H15.4V12.4H2.2Z" fill="#dcb67a"/><path d="M8.6 3.2H14.6" stroke="#f1e2c6" stroke-width=".9"/></svg>
<div class="t" style="left:706.20px;top:540.00px;font-size:12.6px;line-height:15.12px;color:#1e1e1e;transform:scaleX(0.9683);">vendor</div>
<svg class="abs" style="left:665.3px;top:560.88px" width="6" height="10" viewBox="0 0 6 10"><path d="M.7 .9L5 5L.7 9.1Z" fill="#fff" stroke="#3a3a3a" stroke-width="1.1" stroke-linejoin="round"/></svg>
<svg class="abs" style="left:684.8px;top:557.88px" width="16" height="16" viewBox="0 0 16 16"><rect x="1.9" y="2.2" width="12.9" height="11" fill="#f6f6f6" stroke="#424242" stroke-width="1.3"/><path d="M1.3 3.2H15.4" stroke="#424242" stroke-width="2.6"/><path d="M3.4 7.2H13.6" stroke="#5a5a5a" stroke-width="1" stroke-dasharray="1.2 .9"/><path d="M4.4 6.4V12" stroke="#5a5a5a" stroke-width="1" stroke-dasharray="1.2 .9"/></svg>
<div class="t" style="left:706.20px;top:559.00px;font-size:12.6px;line-height:15.12px;color:#1e1e1e;transform:scaleX(0.9296);">MasterPage.master</div>
<svg class="abs" style="left:684.8px;top:576.64px" width="16" height="16" viewBox="0 0 16 16"><path d="M5.6 1.6H12L15.2 4.8V13.6H6.4" fill="#f6f6f6" stroke="#424242" stroke-width="1.2"/><path d="M11.8 1.6V5H15.2" fill="none" stroke="#424242" stroke-width="1"/><path d="M2.9 5.6V2.2Q1 2.8 1 4.8Q1 6.6 2.6 7.4V14.2H4.6V7.4Q6.2 6.6 6.2 4.8Q6.2 2.8 4.3 2.2V5.6Z" fill="#424242"/></svg>
<div class="t" style="left:706.20px;top:578.00px;font-size:12.6px;line-height:15.12px;color:#1e1e1e;transform:scaleX(0.9533);">packages.config</div>
<div class="abs" style="left:635.2px;top:594.02px;width:320.8px;height:18.76px;background:#ccceDB;"></div>
<svg class="abs" style="left:665.3px;top:598.4px" width="6" height="10" viewBox="0 0 6 10"><path d="M.7 .9L5 5L.7 9.1Z" fill="#fff" stroke="#3a3a3a" stroke-width="1.1" stroke-linejoin="round"/></svg>
<svg class="abs" style="left:684.8px;top:595.4px" width="16" height="16" viewBox="0 0 16 16"><path d="M4.6 1.4H11.8L15 4.6V13.6H6" fill="#f6f6f6" stroke="#424242" stroke-width="1.2"/><path d="M11.6 1.4V4.8H15" fill="none" stroke="#424242" stroke-width="1"/><circle cx="5.6" cy="10.4" r="4.7" fill="#1ba1e2"/><ellipse cx="5.6" cy="10.4" rx="2" ry="4.5" fill="none" stroke="#cfeaff" stroke-width=".8"/><path d="M1 10.4H10.2M1.7 8H9.5M1.7 12.8H9.5M5.6 5.8V15" stroke="#cfeaff" stroke-width=".8"/></svg>
<div class="t" style="left:706.20px;top:597.00px;font-size:12.6px;line-height:15.12px;color:#1e1e1e;transform:scaleX(0.9648);">product.aspx</div>
<svg class="abs" style="left:665.3px;top:617.16px" width="6" height="10" viewBox="0 0 6 10"><path d="M.7 .9L5 5L.7 9.1Z" fill="#fff" stroke="#3a3a3a" stroke-width="1.1" stroke-linejoin="round"/></svg>
<svg class="abs" style="left:684.8px;top:614.16px" width="16" height="16" viewBox="0 0 16 16"><path d="M5.6 1.6H12L15.2 4.8V13.6H6.4" fill="#f6f6f6" stroke="#424242" stroke-width="1.2"/><path d="M11.8 1.6V5H15.2" fill="none" stroke="#424242" stroke-width="1"/><path d="M2.9 5.6V2.2Q1 2.8 1 4.8Q1 6.6 2.6 7.4V14.2H4.6V7.4Q6.2 6.6 6.2 4.8Q6.2 2.8 4.3 2.2V5.6Z" fill="#424242"/></svg>
<div class="t" style="left:706.20px;top:616.00px;font-size:12.6px;line-height:15.12px;color:#1e1e1e;transform:scaleX(0.9714);">Web.config</div>
<svg class="abs" style="left:647.3px;top:637.62px" width="7" height="7" viewBox="0 0 7 7"><path d="M6.3 0V6.3H0Z" fill="#1e1e1e"/></svg>
<svg class="abs" style="left:666px;top:632.92px" width="16" height="16" viewBox="0 0 16 16"><rect x="1.7" y="1.9" width="13.5" height="10.9" fill="#f6f6f6" stroke="#7fbb7f" stroke-width="1.4"/><path d="M7.3 5.9Q6.5 5.1 5.5 5.1Q3.8 5.3 3.8 7.5Q3.8 9.7 5.5 9.9Q6.5 9.9 7.3 9.1" fill="none" stroke="#5b5b5b" stroke-width="1.4"/><path d="M9.7 5V10M11.7 5V10M8.2 6.5H13.4M8.2 8.5H13.4" stroke="#5b5b5b" stroke-width="1.1"/></svg>
<div class="t" style="left:688.30px;top:634.00px;font-size:12.6px;line-height:15.12px;color:#1e1e1e;transform:scaleX(0.9178);">DataAccess</div>
<svg class="abs" style="left:665.3px;top:654.6800000000001px" width="6" height="10" viewBox="0 0 6 10"><path d="M.7 .9L5 5L.7 9.1Z" fill="#fff" stroke="#3a3a3a" stroke-width="1.1" stroke-linejoin="round"/></svg>
<svg class="abs" style="left:685.9px;top:651.98px" width="15" height="15" viewBox="0 0 15 15"><g fill="#424242" stroke="#424242" stroke-width=".5"><path d="M14.3 3.2L11.6 5.9L9.5 5.4L9 3.3L11.7 .6Q9.5 -.2 7.6 1.6Q6 3.4 6.8 5.9L.7 12Q-.1 13 .8 14Q1.8 15 2.8 14.2L8.9 8.1Q11.4 8.9 13.3 7.2Q15 5.4 14.3 3.2Z"/></g></svg>
<div class="t" style="left:706.20px;top:653.00px;font-size:12.6px;line-height:15.12px;color:#1e1e1e;transform:scaleX(0.9491);">Properties</div>
<svg class="abs" style="left:665.3px;top:673.44px" width="6" height="10" viewBox="0 0 6 10"><path d="M.7 .9L5 5L.7 9.1Z" fill="#fff" stroke="#3a3a3a" stroke-width="1.1" stroke-linejoin="round"/></svg>
<svg class="abs" style="left:684.8px;top:670.44px" width="16" height="16" viewBox="0 0 16 16"><rect x="1.2" y="4.5" width="3.9" height="4.5" fill="#424242"/><rect x="9.2" y="3.6" width="6" height="6.2" fill="#424242"/><path d="M5.8 6.8H8.6" stroke="#6a6a6a" stroke-width="1.1" stroke-dasharray="1.1 .8"/></svg>
<div class="t" style="left:706.20px;top:672.00px;font-size:12.6px;line-height:15.12px;color:#1e1e1e;transform:scaleX(0.9095);">References</div>
<svg class="abs" style="left:665.3px;top:692.2px" width="6" height="10" viewBox="0 0 6 10"><path d="M.7 .9L5 5L.7 9.1Z" fill="#fff" stroke="#3a3a3a" stroke-width="1.1" stroke-linejoin="round"/></svg>
<svg class="abs" style="left:684.8px;top:689.2px" width="16" height="16" viewBox="0 0 16 16"><path d="M8 5.6Q7 4.7 5.9 4.7Q3.9 4.9 3.9 7.3Q3.9 9.7 5.9 9.9Q7 9.9 8 9" fill="none" stroke="#3c963c" stroke-width="1.7"/><path d="M10.8 3.3V8.4M12.9 3.3V8.4M9.2 4.9H14.5M9.2 6.9H14.5" stroke="#3c963c" stroke-width="1.2"/></svg>
<div class="t" style="left:706.20px;top:691.00px;font-size:12.6px;line-height:15.12px;color:#1e1e1e;transform:scaleX(0.9040);">DAL_Product.cs</div>
<div class="abs" style="left:635.2px;top:787.5px;width:103.5px;height:19.5px;background:#ffffff;"></div>
<div class="t" style="left:641.00px;top:791.00px;font-size:12.6px;line-height:15.12px;color:#1e1e1e;transform:scaleX(0.9651);">Solution Explorer</div>
<div class="abs" style="left:739px;top:787.7px;width:90px;height:19.3px;background:#4d6082;"></div>
<div class="t" style="left:746.00px;top:791.00px;font-size:12.6px;line-height:15.12px;color:#ffffff;transform:scaleX(0.9480);">Team Explorer</div>
<div class="abs" style="left:0px;top:813px;width:959px;height:22px;background:#007acc;"></div>
<div class="abs" style="left:0px;top:835px;width:959px;height:2px;background:#0a0a0f;"></div>
<div class="abs" style="left:477px;top:835.4px;width:38px;height:1.6px;background:#3c3c42;"></div>
<svg class="abs" style="left:0px;top:820.5px" width="14" height="10.5" viewBox="0 0 14 10.5"><path d="M3 .6H13L10.2 9.8H.2Z" fill="none" stroke="#fff" stroke-width="1.2"/></svg>
<div class="t" style="left:22.00px;top:819.00px;font-size:12.6px;line-height:15.12px;color:#ffffff;transform:scaleX(0.9061);">Ready</div>
<div class="t" style="left:169.00px;top:819.00px;font-size:12.6px;line-height:15.12px;color:#ffffff;transform:scaleX(0.8976);">Ln 28</div>
<div class="t" style="left:261.70px;top:819.00px;font-size:12.6px;line-height:15.12px;color:#ffffff;transform:scaleX(0.9384);">Col 5</div>
<div class="t" style="left:355.00px;top:819.00px;font-size:12.6px;line-height:15.12px;color:#ffffff;transform:scaleX(0.8755);">Ch 5</div>
<div class="t" style="left:494.00px;top:819.00px;font-size:12.6px;line-height:15.12px;color:#ffffff;transform:scaleX(0.8903);">INS</div>
<div class="t" style="left:794.00px;top:819.00px;font-size:12.6px;line-height:15.12px;color:#ffffff;transform:scaleX(0.9680);">Add to Source Control</div>
<svg class="abs" style="left:775px;top:820.5px" width="10" height="11" viewBox="0 0 10 11"><path d="M5 10.8V1.6M1 5.4L5 1.2L9 5.4" fill="none" stroke="#fff" stroke-width="1.6"/></svg>
<svg class="abs" style="left:921px;top:823.5px" width="9" height="5" viewBox="0 0 9 5"><path d="M0 5L4.5 0L9 5Z" fill="#fff"/></svg>
<svg class="abs" style="left:947.5px;top:825px" width="10" height="10" viewBox="0 0 10 10"><g fill="#7ab8e6"><rect x="8" y="0" width="1.3" height="1.3"/><rect x="5.4" y="2.6" width="1.3" height="1.3"/><rect x="8" y="2.6" width="1.3" height="1.3"/><rect x="2.8" y="5.2" width="1.3" height="1.3"/><rect x="5.4" y="5.2" width="1.3" height="1.3"/><rect x="8" y="5.2" width="1.3" height="1.3"/><rect x=".2" y="7.8" width="1.3" height="1.3"/><rect x="2.8" y="7.8" width="1.3" height="1.3"/><rect x="5.4" y="7.8" width="1.3" height="1.3"/><rect x="8" y="7.8" width="1.3" height="1.3"/></g></svg>
</div>
</body>
</html>
